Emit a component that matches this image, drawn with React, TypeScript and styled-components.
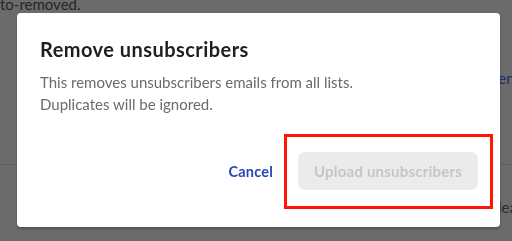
import React from "react";
import styled, { createGlobalStyle } from "styled-components";

const GlobalStyle = createGlobalStyle`
  html, body {
    margin: 0;
    padding: 0;
    width: 512px;
    height: 241px;
    overflow: hidden;
    background: #ffffff;
    font-family: Lato, "Open Sans", sans-serif;
  }
`;

export default function App() {
  return (
    <>
      <GlobalStyle />
      <Page>
        <Lead>to-removed.</Lead>
        <ListRow top={55} lead={478}>
          <span />
          <LinkText>Open</LinkText>
        </ListRow>
        <ListRow top={55} lead={478} divided>
          <span />
          <span />
        </ListRow>
        <ListRow top={33} lead={488}>
          <span />
          <PlainText>Clear</PlainText>
        </ListRow>
      </Page>

      <Overlay>
        <Dialog role="dialog" aria-labelledby="remove-title">
          <Title id="remove-title">Remove unsubscribers</Title>
          <Body>
            This removes unsubscribers emails from all lists.
            <br />
            Duplicates will be ignored.
          </Body>
          <Footer>
            <CancelButton>Cancel</CancelButton>
            <Highlight>
              <UploadButton disabled>Upload unsubscribers</UploadButton>
            </Highlight>
          </Footer>
        </Dialog>
      </Overlay>
    </>
  );
}

const Page = styled.div`
  display: flex;
  flex-direction: column;
  height: 241px;
`;

const Lead = styled.p`
  margin: -6px 0 0 0;
  font-size: 15px;
  line-height: 20px;
  color: #5a5a5a;
`;

const ListRow = styled.div<{ top: number; lead: number; divided?: boolean }>`
  display: grid;
  grid-template-columns: ${(p) => p.lead}px 1fr;
  margin-top: ${(p) => p.top}px;
  height: 20px;
  white-space: nowrap;
  border-bottom: ${(p) => (p.divided ? "1px solid #e4e4e4" : "none")};
`;

const LinkText = styled.span`
  font-size: 15px;
  color: #4a66ff;
`;

const PlainText = styled.span`
  font-size: 15px;
  color: #666;
`;

const Overlay = styled.div`
  position: fixed;
  inset: 0;
  background: rgba(0, 0, 0, 0.58);
  display: flex;
  align-items: flex-start;
  padding: 13px 12px 0 17px;
`;

const Dialog = styled.div`
  flex: 1;
  height: 214px;
  background: #ffffff;
  border-radius: 4px;
  box-shadow: 0 2px 3px rgba(0, 0, 0, 0.25);
  padding: 24px 7px 0 23px;
  box-sizing: border-box;
  display: flex;
  flex-direction: column;
`;

const Title = styled.h2`
  margin: 0;
  font-size: 20px;
  line-height: 24px;
  font-weight: 700;
  letter-spacing: 0.45px;
  color: #1f1f1f;
`;

const Body = styled.p`
  margin: 10px 0 0 0;
  font-size: 15px;
  line-height: 22px;
  color: #6b6b6b;
`;

const Footer = styled.div`
  display: flex;
  justify-content: flex-end;
  align-items: center;
  gap: 11px;
  margin-top: 19px;
`;

const CancelButton = styled.button`
  border: 0;
  background: none;
  padding: 0;
  font-family: inherit;
  font-size: 14.5px;
  font-weight: 700;
  letter-spacing: 0.2px;
  color: #2a46b6;
  cursor: pointer;
`;

const Highlight = styled.div`
  border: 3px solid #ff1405;
  padding: 15px 12px 16px 11px;
`;

const UploadButton = styled.button`
  width: 180px;
  height: 38px;
  border: 0;
  border-radius: 7px;
  background: #ebebeb;
  font-family: inherit;
  font-size: 15px;
  font-weight: 700;
  letter-spacing: 0.2px;
  color: #c6c6c6;
`;
